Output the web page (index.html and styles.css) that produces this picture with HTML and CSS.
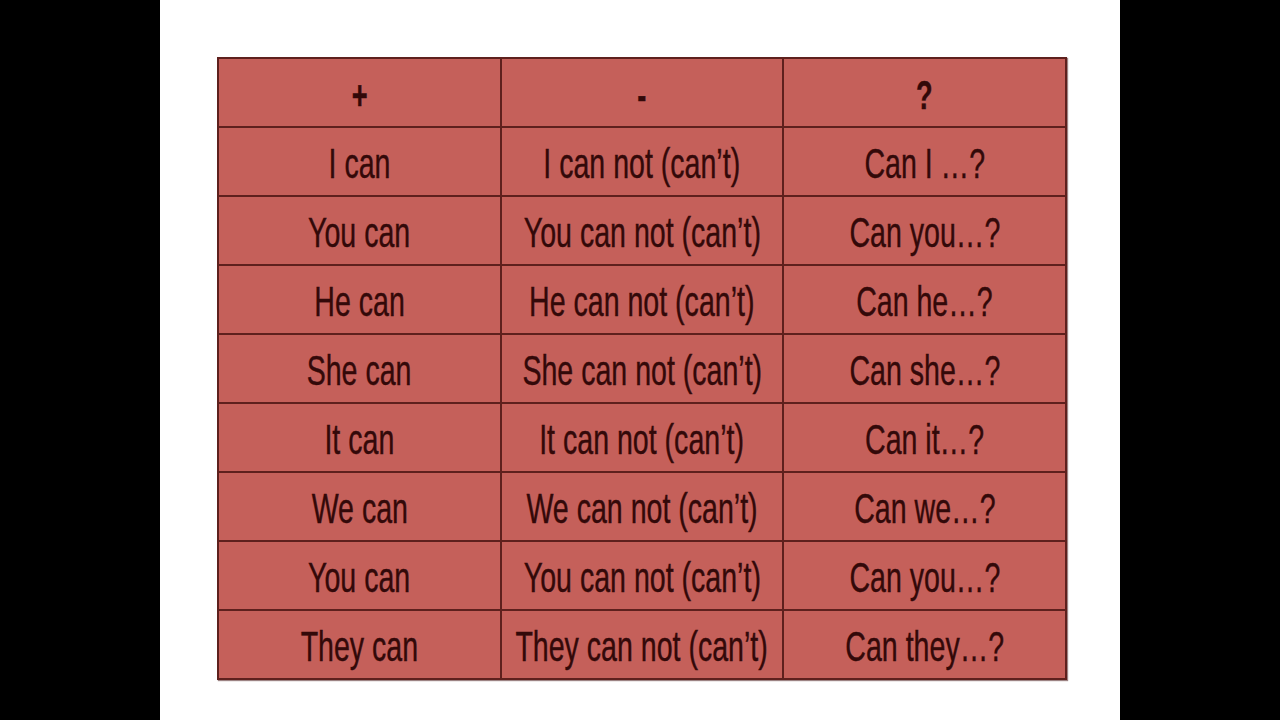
FILE: index.html
```html
<!DOCTYPE html>
<html>
<head>
<meta charset="utf-8">
<link rel="stylesheet" href="styles.css">
</head>
<body>
<div class="screen">
  <div class="slide">
    <table class="grid">
      <tr class="head"><td><div class="c"><span>+</span></div></td><td><div class="c"><span>-</span></div></td><td><div class="c"><span>?</span></div></td></tr>
      <tr><td><div class="c"><span>I can</span></div></td><td><div class="c"><span>I can not (can’t)</span></div></td><td><div class="c"><span>Can I …?</span></div></td></tr>
      <tr><td><div class="c"><span>You can</span></div></td><td><div class="c"><span>You can not (can’t)</span></div></td><td><div class="c"><span>Can you…?</span></div></td></tr>
      <tr><td><div class="c"><span>He can</span></div></td><td><div class="c"><span>He can not (can’t)</span></div></td><td><div class="c"><span>Can he…?</span></div></td></tr>
      <tr><td><div class="c"><span>She can</span></div></td><td><div class="c"><span>She can not (can’t)</span></div></td><td><div class="c"><span>Can she…?</span></div></td></tr>
      <tr><td><div class="c"><span>It can</span></div></td><td><div class="c"><span>It can not (can’t)</span></div></td><td><div class="c"><span>Can it…?</span></div></td></tr>
      <tr><td><div class="c"><span>We can</span></div></td><td><div class="c"><span>We can not (can’t)</span></div></td><td><div class="c"><span>Can we…?</span></div></td></tr>
      <tr><td><div class="c"><span>You can</span></div></td><td><div class="c"><span>You can not (can’t)</span></div></td><td><div class="c"><span>Can you…?</span></div></td></tr>
      <tr><td><div class="c"><span>They can</span></div></td><td><div class="c"><span>They can not (can’t)</span></div></td><td><div class="c"><span>Can they…?</span></div></td></tr>
    </table>
  </div>
</div>
</body>
</html>
```
FILE: styles.css
```css
html, body {
  margin: 0;
  padding: 0;
  background: #000;
}
.screen {
  width: 1280px;
  height: 720px;
  display: flex;
  justify-content: center;
  background: #000;
}
.slide {
  width: 960px;
  height: 720px;
  background: #fff;
  box-sizing: border-box;
  padding: 57px 0 0 57px;
}
.grid {
  border-collapse: collapse;
  table-layout: fixed;
  width: 850px;
  background: #c5605a;
  font-family: "Liberation Sans", Arial, sans-serif;
  color: #330909;
  box-shadow: 1px 1px 1px rgba(60, 10, 10, 0.5);
}
.grid td {
  border: 2px solid #5e201d;
  height: 67px;
  padding: 0;
  vertical-align: middle;
  font-size: 42px;
  line-height: 42px;
  white-space: nowrap;
  -webkit-text-stroke: 0.4px #330909;
}
.c {
  display: flex;
  justify-content: center;
  align-items: center;
  width: 100%;
}
.c span {
  flex: none;
  display: block;
  transform: scaleX(0.68);
  position: relative;
  top: 2px;
}
.grid .head td {
  font-weight: bold;
  font-size: 40px;
}
```
